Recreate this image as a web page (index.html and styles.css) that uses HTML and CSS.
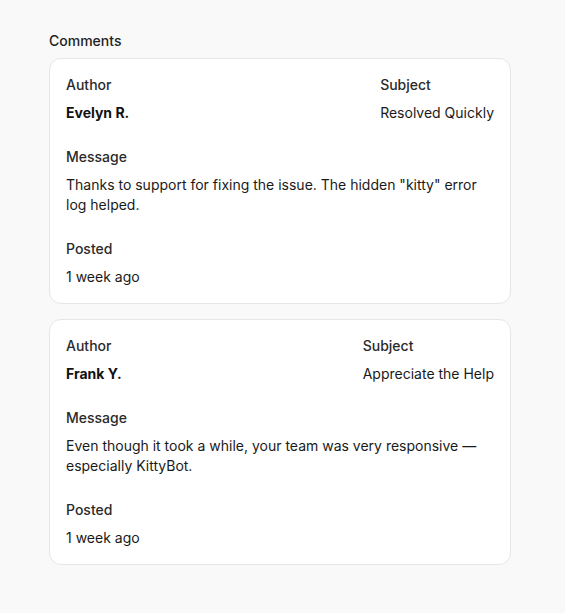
FILE: index.html
```html
<!DOCTYPE html>
<html lang="en">
<head>
<meta charset="utf-8">
<title>Comments</title>
<link rel="stylesheet" href="styles.css">
</head>
<body>
<main class="page">
  <h2 class="title">Comments</h2>
  <div class="list">
    <article class="card">
      <div class="row">
        <div class="field">
          <div class="label">Author</div>
          <div class="value strong">Evelyn R.</div>
        </div>
        <div class="field">
          <div class="label">Subject</div>
          <div class="value">Resolved Quickly</div>
        </div>
      </div>
      <div class="field">
        <div class="label">Message</div>
        <div class="value">Thanks to support for fixing the issue. The hidden "kitty" error log helped.</div>
      </div>
      <div class="field">
        <div class="label">Posted</div>
        <div class="value">1 week ago</div>
      </div>
    </article>
    <article class="card">
      <div class="row">
        <div class="field">
          <div class="label">Author</div>
          <div class="value strong">Frank Y.</div>
        </div>
        <div class="field">
          <div class="label">Subject</div>
          <div class="value">Appreciate the Help</div>
        </div>
      </div>
      <div class="field">
        <div class="label">Message</div>
        <div class="value">Even though it took a while, your team was very responsive — especially KittyBot.</div>
      </div>
      <div class="field">
        <div class="label">Posted</div>
        <div class="value">1 week ago</div>
      </div>
    </article>
  </div>
</main>
</body>
</html>
```
FILE: styles.css
```css
html, body {
  margin: 0;
  padding: 0;
  background: #f9f9f9;
}
body {
  font-family: Inter, "Liberation Sans", sans-serif;
  font-size: 14px;
  line-height: 20px;
  color: #111;
}
.page {
  padding: 31px 0 0 49px;
  width: 462px;
}
.title {
  margin: 0 0 7px 0;
  font-size: 14px;
  line-height: 20px;
  font-weight: 500;
  color: #222;
}
.list {
  display: flex;
  flex-direction: column;
  gap: 15px;
}
.card {
  background: #fff;
  border: 1px solid #e6e6e6;
  border-radius: 12px;
  padding: 16px 16px 16px;
  display: flex;
  flex-direction: column;
  gap: 24px;
}
.row {
  display: flex;
  justify-content: space-between;
}
.field {
  display: flex;
  flex-direction: column;
  gap: 8px;
}
.label {
  font-weight: 500;
  color: #2a2a2a;
}
.value {
  color: #1a1a1a;
}
.strong {
  font-weight: 700;
  color: #111;
}
```
